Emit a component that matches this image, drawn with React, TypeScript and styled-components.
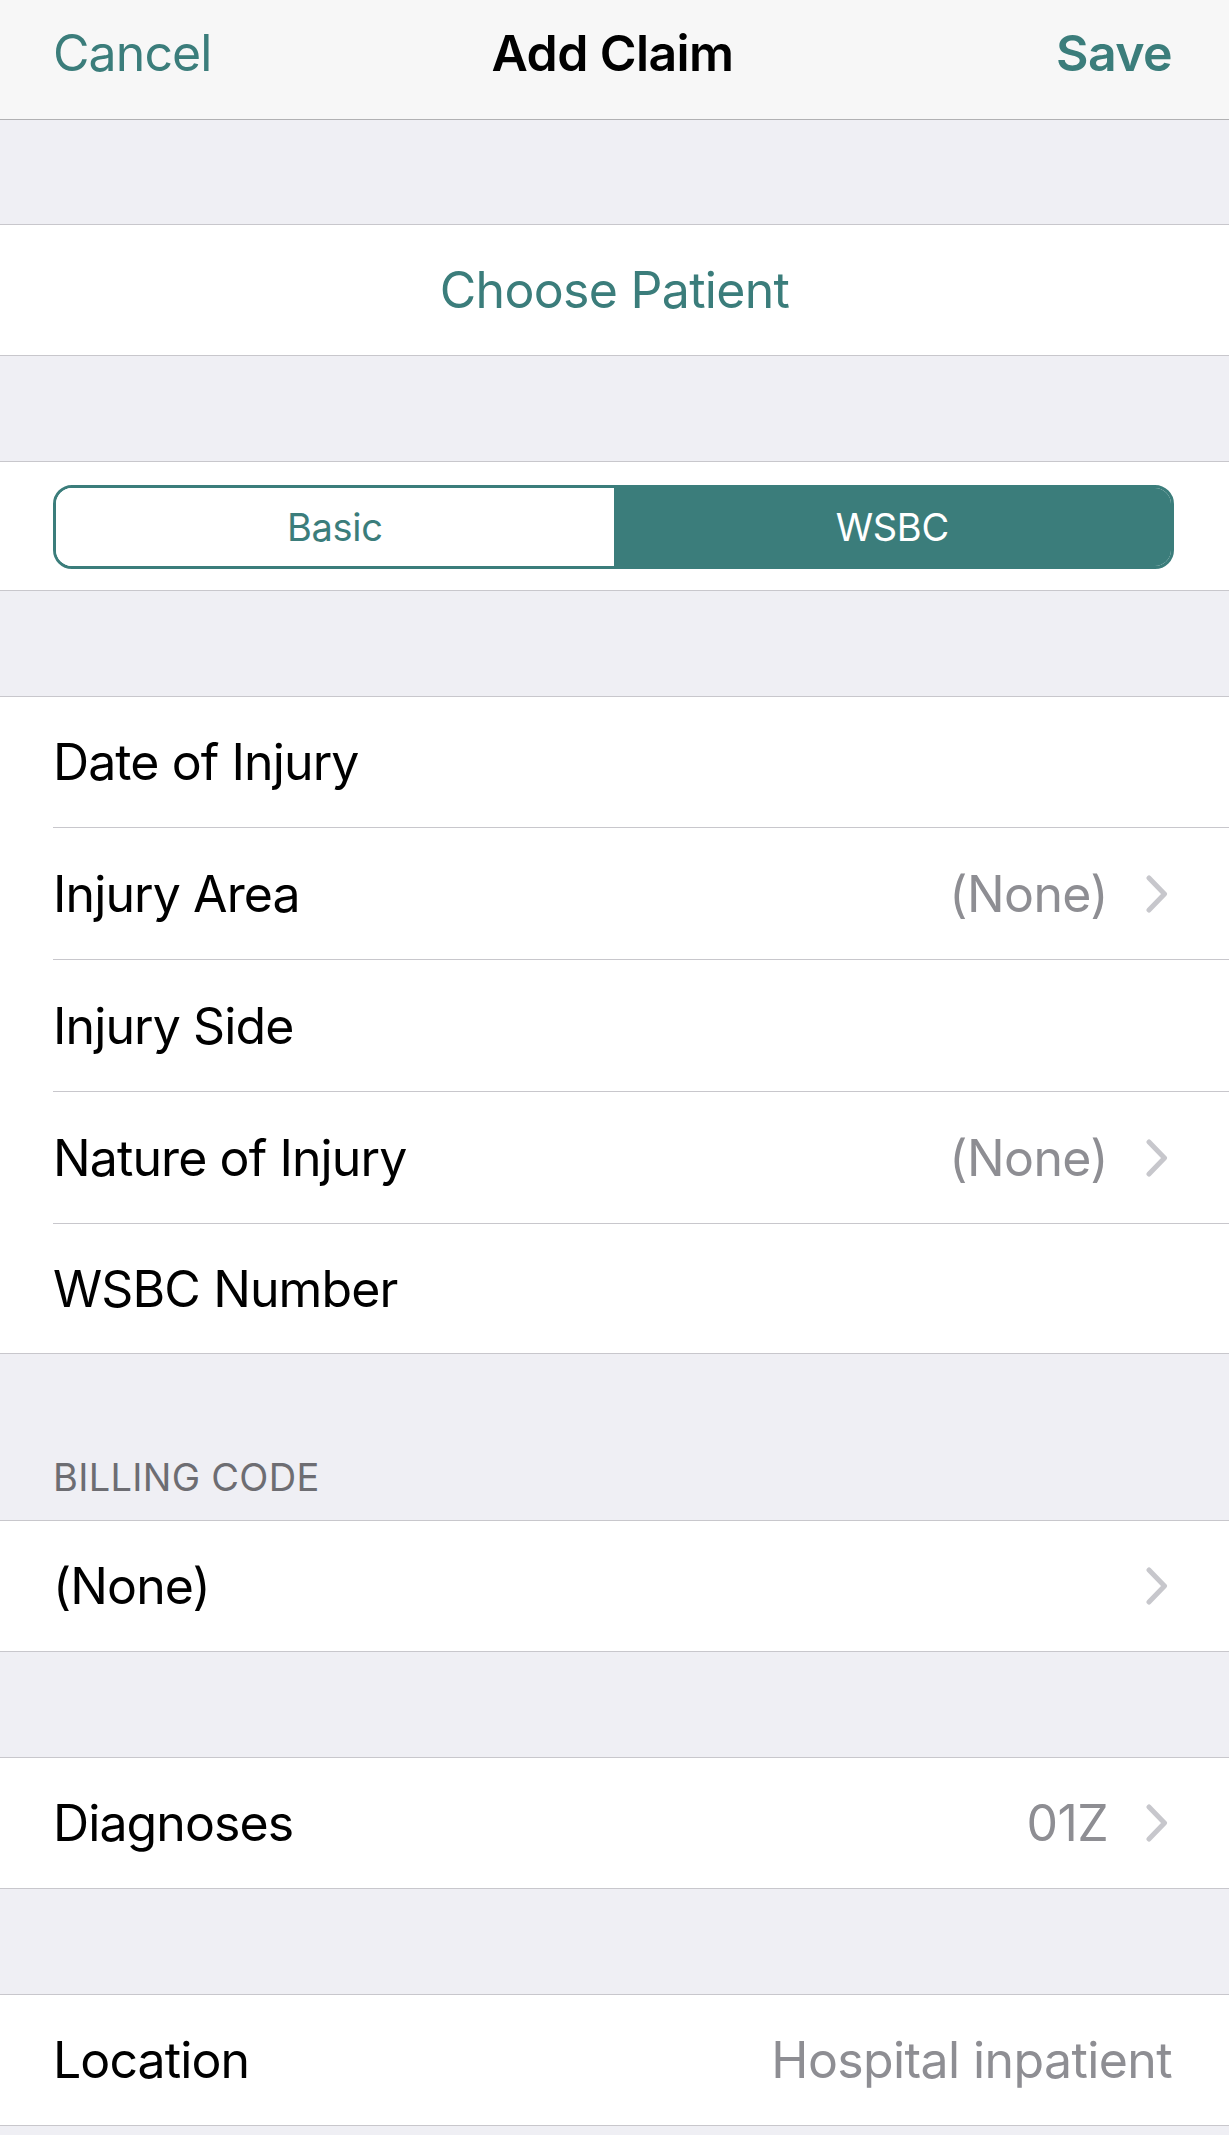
import React from "react";
import styled, { createGlobalStyle } from "styled-components";

const teal = "#3b7d7b";
const hairline = "#c8c7cc";

const GlobalStyle = createGlobalStyle`
  html, body {
    margin: 0;
    padding: 0;
    background: #efeff4;
    font-family: Inter, "Noto Sans", "Liberation Sans", sans-serif;
    -webkit-font-smoothing: antialiased;
  }
`;

const Page = styled.div`
  min-height: 2135px;
  background: #efeff4;
  display: flex;
  flex-direction: column;
`;

const NavBar = styled.header`
  height: 120px;
  box-sizing: border-box;
  background: #f7f7f7;
  border-bottom: 1px solid #b1b1b3;
  display: grid;
  grid-template-columns: 1fr auto 1fr;
  align-items: center;
  padding: 0 57px 14px 53px;
  font-size: 50px;
  letter-spacing: -0.6px;
`;

const NavButton = styled.span<{ $bold?: boolean; $right?: boolean }>`
  color: ${teal};
  font-weight: ${(p) => (p.$bold ? 600 : 400)};
  justify-self: ${(p) => (p.$right ? "end" : "start")};
  letter-spacing: ${(p) => (p.$bold ? "-0.6px" : "-0.9px")};
`;

const NavTitle = styled.span`
  color: #000;
  font-weight: 600;
`;

const Gap = styled.div<{ $h: number }>`
  height: ${(p) => p.$h}px;
`;

const SectionHeader = styled.div`
  height: 166px;
  box-sizing: border-box;
  display: flex;
  align-items: flex-end;
  padding: 0 53px 20px;
  color: #6d6d72;
  font-size: 38px;
  letter-spacing: 0.3px;
`;

const Section = styled.section`
  background: #fff;
  border-top: 1px solid ${hairline};
  border-bottom: 1px solid ${hairline};
`;

const CenterRow = styled.div`
  height: 130px;
  display: flex;
  align-items: center;
  justify-content: center;
  color: ${teal};
  font-size: 50px;
  letter-spacing: -0.7px;
`;

const SegmentRow = styled.div`
  height: 128px;
  box-sizing: border-box;
  padding: 23px 55px 0 53px;
`;

const Segmented = styled.div`
  height: 84px;
  box-sizing: border-box;
  border: 3px solid ${teal};
  border-radius: 19px;
  display: flex;
  overflow: hidden;
`;

const Segment = styled.div<{ $active?: boolean }>`
  flex: 1;
  display: flex;
  align-items: center;
  justify-content: center;
  font-size: 38px;
  letter-spacing: -0.3px;
  background: ${(p) => (p.$active ? teal : "#fff")};
  color: ${(p) => (p.$active ? "#fff" : teal)};
`;

const Row = styled.div<{ $h?: number }>`
  margin-left: 53px;
  padding-right: 57px;
  height: ${(p) => p.$h ?? 130}px;
  display: flex;
  align-items: center;
  font-size: 50px;
  letter-spacing: -0.9px;
  color: #000;

  & + & {
    border-top: 1px solid ${hairline};
  }
`;

const Label = styled.span`
  flex: 1;
`;

const Value = styled.span`
  color: #8e8e93;
  letter-spacing: -0.6px;
`;

const ChevronIcon = styled.svg`
  width: 22px;
  height: 38px;
  margin-left: 38px;
  margin-right: 4px;
  flex-shrink: 0;
`;

function Chevron() {
  return (
    <ChevronIcon viewBox="0 0 22 38" fill="none">
      <path
        d="M3 3 L18.5 19 L3 35"
        stroke="#c7c7cc"
        strokeWidth="5"
        strokeLinecap="round"
        strokeLinejoin="round"
      />
    </ChevronIcon>
  );
}

function ListRow({
  label,
  value,
  chevron,
  h,
}: {
  label: string;
  value?: string;
  chevron?: boolean;
  h?: number;
}) {
  return (
    <Row $h={h}>
      <Label>{label}</Label>
      {value && <Value>{value}</Value>}
      {chevron && <Chevron />}
    </Row>
  );
}

export default function App() {
  return (
    <>
      <GlobalStyle />
      <Page>
        <NavBar>
          <NavButton>Cancel</NavButton>
          <NavTitle>Add Claim</NavTitle>
          <NavButton $bold $right>
            Save
          </NavButton>
        </NavBar>

        <Gap $h={104} />
        <Section>
          <CenterRow>Choose Patient</CenterRow>
        </Section>

        <Gap $h={105} />
        <Section>
          <SegmentRow>
            <Segmented>
              <Segment>Basic</Segment>
              <Segment $active>WSBC</Segment>
            </Segmented>
          </SegmentRow>
        </Section>

        <Gap $h={105} />
        <Section>
          <ListRow label="Date of Injury" h={130} />
          <ListRow label="Injury Area" value="(None)" chevron h={131} />
          <ListRow label="Injury Side" h={131} />
          <ListRow label="Nature of Injury" value="(None)" chevron h={131} />
          <ListRow label="WSBC Number" h={129} />
        </Section>

        <SectionHeader>BILLING CODE</SectionHeader>
        <Section>
          <ListRow label="(None)" chevron />
        </Section>

        <Gap $h={105} />
        <Section>
          <ListRow label="Diagnoses" value="01Z" chevron />
        </Section>

        <Gap $h={105} />
        <Section>
          <ListRow label="Location" value="Hospital inpatient" />
        </Section>
      </Page>
    </>
  );
}
